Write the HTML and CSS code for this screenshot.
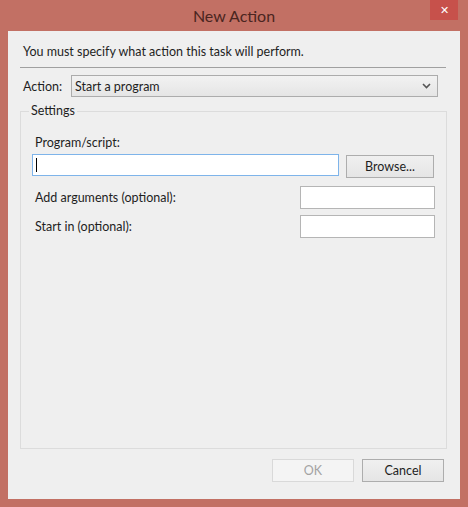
FILE: index.html
```html
<!DOCTYPE html>
<html lang="en">
<head>
  <meta charset="UTF-8">
  <title>New Action</title>
  <link rel="stylesheet" href="styles.css">
</head>
<body>
  <div class="titlebar">
    <span class="title">New Action</span>
    <span class="close">&#x2715;</span>
  </div>

  <div class="client">
    <p class="intro">You must specify what action this task will perform.</p>
    <div class="sep"></div>

    <div class="action-row">
      <label for="action">Action:</label>
      <div class="combo" id="action">
        <span>Start a program</span>
        <svg width="9" height="6" viewBox="0 0 9 6"><path d="M1 1 L4.5 4.5 L8 1" fill="none" stroke="#555" stroke-width="1.6"/></svg>
      </div>
    </div>

    <div class="group">
      <span class="group-title">Settings</span>
      <div class="field-label">Program/script:</div>
      <div class="prog-row">
        <div class="input focused"><span class="caret"></span></div>
        <div class="btn">Browse...</div>
      </div>
      <div class="opt-row">
        <span>Add arguments (optional):</span>
        <div class="input small"></div>
      </div>
      <div class="opt-row">
        <span>Start in (optional):</span>
        <div class="input small"></div>
      </div>
    </div>

    <div class="buttons">
      <div class="btn disabled">OK</div>
      <div class="btn">Cancel</div>
    </div>
  </div>
</body>
</html>
```

FILE: styles.css
```css
body { margin: 0; background: #c27064; font-family: Lato, "Open Sans", sans-serif; font-size: 12.5px; color: #1e1e1e; width: 468px; height: 507px; overflow: hidden; }
.titlebar { height: 31px; position: relative; display: flex; justify-content: center; align-items: center; }
.title { font-size: 16px; color: #4a2520; margin-top: -1px; }
.close { position: absolute; left: 430px; top: 0; width: 28px; height: 20px; background: #c7514b; color: #fff; font-size: 11px; display: flex; justify-content: center; align-items: center; }
.client { margin: 0 8px; height: 468px; background: #efefef; position: relative; }
.intro { margin: 0; padding: 13px 0 0 15px; line-height: 16px; }
.sep { height: 1px; background: #a0a0a0; margin: 7px 14px 0 12px; }
.action-row { display: flex; align-items: center; margin-top: 7px; padding-left: 15px; }
.action-row label { width: 48px; }
.combo { width: 367px; height: 22px; box-sizing: border-box; border: 1px solid #acacac; background: linear-gradient(#f2f2f2, #e5e5e5); display: flex; align-items: center; justify-content: space-between; padding: 0 6px 0 3px; }
.group { margin: 14px 13px 0 12px; height: 336px; border: 1px solid #dcdcdc; position: relative; padding: 0 0 0 11px; }
.group-title { position: absolute; top: -9px; left: 8px; background: #efefef; padding: 0 2px; line-height: 16px; }
.field-label { margin: 23px 0 0 3px; line-height: 16px; }
.prog-row { display: flex; align-items: flex-start; margin-top: 3px; }
.input { background: #fff; border: 1px solid #abadb3; height: 21px; box-sizing: border-box; }
.input.focused { width: 307px; height: 22px; border-color: #7eb4ea; display: flex; align-items: center; padding-left: 3px; }
.caret { width: 1px; height: 14px; background: #000; }
.btn { width: 88px; height: 23px; box-sizing: border-box; border: 1px solid #adadad; background: linear-gradient(#f0f0f0, #e5e5e5); display: flex; justify-content: center; align-items: center; }
.prog-row .btn { margin: 1px 0 0 7px; }
.opt-row { display: flex; justify-content: space-between; align-items: center; margin-top: 8px; padding: 0 11px 0 3px; }
.opt-row + .opt-row { margin-top: 6px; }
.input.small { width: 135px; height: 23px; border-color: #b5b5b5; }
.buttons { display: flex; justify-content: flex-end; gap: 8px; margin: 10px 16px 0 0; }
.buttons .btn { width: 82px; }
.btn.disabled { border-color: #d9d9d9; background: #f4f4f4; color: #a3a3a3; }
```
